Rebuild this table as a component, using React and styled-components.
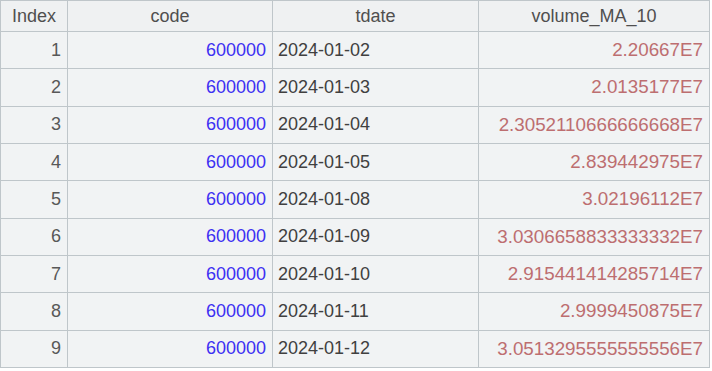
import React from 'react'
import styled, { createGlobalStyle } from 'styled-components';

const GlobalStyle = createGlobalStyle`
  html, body {
    margin: 0;
    padding: 0;
    background: #ffffff;
  }
  body {
    font-family: "Liberation Sans", Arial, sans-serif;
  }
`;

const rows = [
  ['1', '600000', '2024-01-02', '2.20667E7'],
  ['2', '600000', '2024-01-03', '2.0135177E7'],
  ['3', '600000', '2024-01-04', '2.3052110666666668E7'],
  ['4', '600000', '2024-01-05', '2.839442975E7'],
  ['5', '600000', '2024-01-08', '3.02196112E7'],
  ['6', '600000', '2024-01-09', '3.0306658833333332E7'],
  ['7', '600000', '2024-01-10', '2.915441414285714E7'],
  ['8', '600000', '2024-01-11', '2.9999450875E7'],
  ['9', '600000', '2024-01-12', '3.0513295555555556E7'],
];

const colors = {
  index: '#585858',
  code: '#3d30f2',
  date: '#404040',
  value: '#bd6e70',
};

const App = () => {
  return (
    <>
      <GlobalStyle />
      <Grid>
        <HeadCell>Index</HeadCell>
        <HeadCell>code</HeadCell>
        <HeadCell>tdate</HeadCell>
        <HeadCell>volume_MA_10</HeadCell>
        {rows.map((r) => (
          <React.Fragment key={r[0]}>
            <Cell $align='right' $color={colors.index}>{r[0]}</Cell>
            <Cell $align='right' $color={colors.code}>{r[1]}</Cell>
            <Cell $align='left' $color={colors.date}>{r[2]}</Cell>
            <Cell $align='right' $color={colors.value} $size='18.8px'>{r[3]}</Cell>
          </React.Fragment>
        ))}
      </Grid>
    </>
  )
}

export default App

const Grid = styled.div`
  display: grid;
  box-sizing: border-box;
  width: 710px;
  height: 368px;
  padding: 1px;
  gap: 1px;
  background-color: #bfc6ca;
  grid-template-columns: 66px 204px 205px 230px;
  grid-template-rows: 30px repeat(9, 1fr);
`;

const HeadCell = styled.div`
  background-color: #eff1f2;
  color: #4f4f4f;
  font-size: 18px;
  display: flex;
  align-items: center;
  justify-content: center;
  white-space: nowrap;
`;

const Cell = styled.div`
  background-color: #f1f3f4;
  color: ${(p) => p.$color};
  font-size: ${(p) => p.$size || '18px'};
  display: flex;
  align-items: center;
  justify-content: ${(p) => (p.$align === 'left' ? 'flex-start' : 'flex-end')};
  padding: ${(p) => (p.$align === 'left' ? '0 0 0 5px' : '0 6px 0 0')};
  white-space: nowrap;
`;
